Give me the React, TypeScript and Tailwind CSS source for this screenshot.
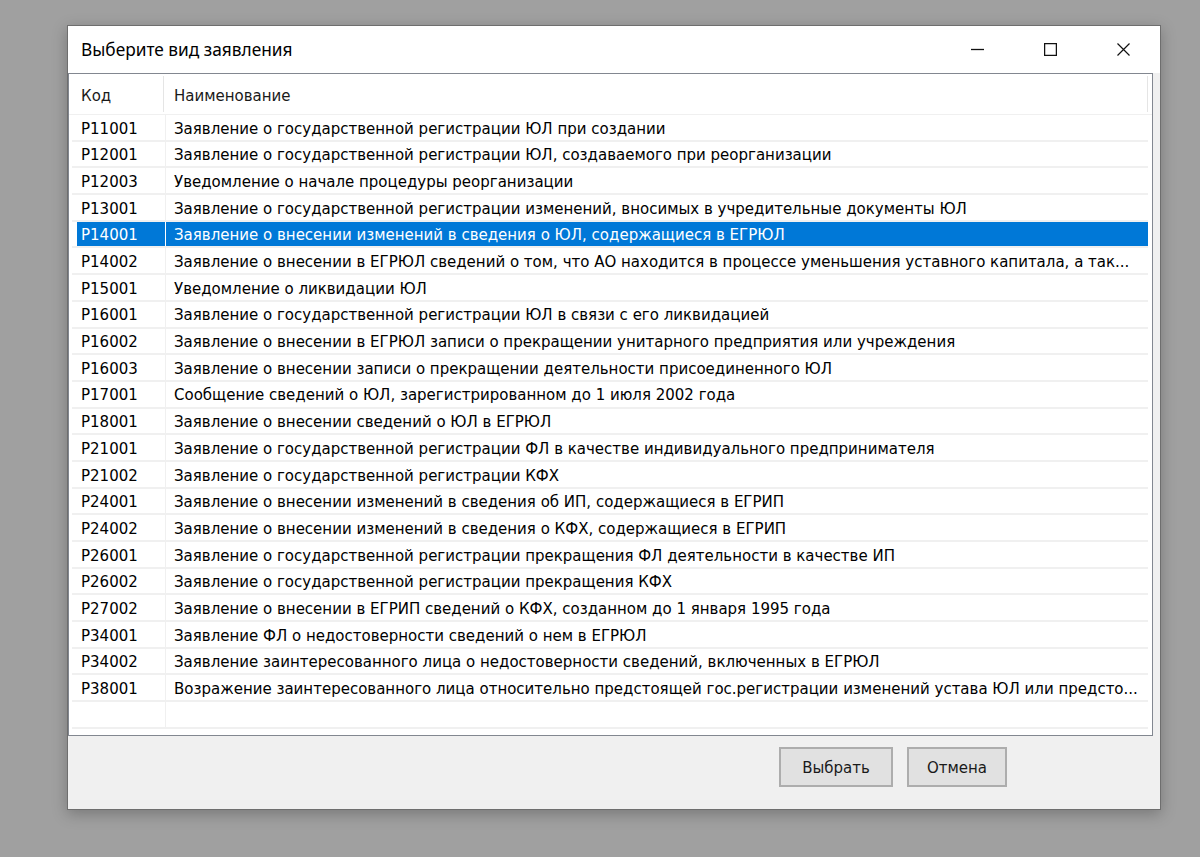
import React from "react";

const rows: [string, string][] = [
  ["P11001", "Заявление о государственной регистрации ЮЛ при создании"],
  ["P12001", "Заявление о государственной регистрации ЮЛ, создаваемого при реорганизации"],
  ["P12003", "Уведомление о начале процедуры реорганизации"],
  ["P13001", "Заявление о государственной регистрации изменений, вносимых в учредительные документы ЮЛ"],
  ["P14001", "Заявление о внесении изменений в сведения о ЮЛ, содержащиеся в ЕГРЮЛ"],
  ["P14002", "Заявление о внесении в ЕГРЮЛ сведений о том, что АО находится в процессе уменьшения уставного капитала, а так..."],
  ["P15001", "Уведомление о ликвидации ЮЛ"],
  ["P16001", "Заявление о государственной регистрации ЮЛ в связи с его ликвидацией"],
  ["P16002", "Заявление о внесении в ЕГРЮЛ записи о прекращении унитарного предприятия или учреждения"],
  ["P16003", "Заявление о внесении записи о прекращении деятельности присоединенного ЮЛ"],
  ["P17001", "Сообщение сведений о ЮЛ, зарегистрированном до 1 июля 2002 года"],
  ["P18001", "Заявление о внесении сведений о ЮЛ в ЕГРЮЛ"],
  ["P21001", "Заявление о государственной регистрации ФЛ в качестве индивидуального предпринимателя"],
  ["P21002", "Заявление о государственной регистрации КФХ"],
  ["P24001", "Заявление о внесении изменений в сведения об ИП, содержащиеся в ЕГРИП"],
  ["P24002", "Заявление о внесении изменений в сведения о КФХ, содержащиеся в ЕГРИП"],
  ["P26001", "Заявление о государственной регистрации прекращения ФЛ деятельности в качестве ИП"],
  ["P26002", "Заявление о государственной регистрации прекращения КФХ"],
  ["P27002", "Заявление о внесении в ЕГРИП сведений о КФХ, созданном до 1 января 1995 года"],
  ["P34001", "Заявление ФЛ о недостоверности сведений о нем в ЕГРЮЛ"],
  ["P34002", "Заявление заинтересованного лица о недостоверности сведений, включенных в ЕГРЮЛ"],
  ["P38001", "Возражение заинтересованного лица относительно предстоящей гос.регистрации изменений устава ЮЛ или предсто..."],
];

const SELECTED = "P14001";

export default function App() {
  return (
    <div className="w-[1200px] h-[857px] bg-[#a0a0a0] pt-[25px] pl-[67px] overflow-hidden">
      <div className="w-[1094px] h-[785px] border border-[#6e6e6e] bg-[#f0f0f0] flex flex-col shadow-[0_4px_14px_rgba(0,0,0,0.25)]">
        {/* title bar */}
        <div className="h-[47px] bg-white flex items-center shrink-0">
          <div className="pl-[13px] flex-1 text-[17.3px] text-black font-['Noto_Sans',sans-serif]">
            Выберите вид заявления
          </div>
          <div className="flex h-full">
            <div className="w-[73px] flex items-center justify-center">
              <svg width="13" height="13" viewBox="0 0 13 13">
                <path d="M0 6.5h13" stroke="#111" strokeWidth="1.3" />
              </svg>
            </div>
            <div className="w-[73px] flex items-center justify-center">
              <svg width="13" height="13" viewBox="0 0 13 13">
                <rect x="0.6" y="0.6" width="11.8" height="11.8" fill="none" stroke="#111" strokeWidth="1.3" />
              </svg>
            </div>
            <div className="w-[73px] flex items-center justify-center">
              <svg width="13" height="13" viewBox="0 0 13 13">
                <path d="M0.5 0.5l12 12M12.5 0.5l-12 12" stroke="#111" strokeWidth="1.2" />
              </svg>
            </div>
          </div>
        </div>

        {/* list view */}
        <div className="mr-[7px] h-[663px] border border-[#828790] bg-white flex flex-col overflow-hidden font-['DejaVu_Sans',Verdana,sans-serif] text-[15px] text-black shrink-0">
          <div className="h-[41px] flex items-center shrink-0 border-b border-[#f0f0f0]">
            <div className="w-[95px] pl-[12px] pt-[5px] h-[36px] flex items-center border-r border-[#e5e5e5] text-[#1a1a1a]">Код</div>
            <div className="w-[984px] pl-[10px] pt-[5px] h-[36px] flex items-center border-r border-[#e5e5e5] text-[#1a1a1a]">Наименование</div>
          </div>
          <div className="pl-[3px]">
            {rows.map(([code, name]) => {
              const sel = code === SELECTED;
              return (
                <div key={code} className="h-[26.7px] w-[1076px] flex border-b-2 border-[#f0f0f0]">
                  {sel ? (
                    <>
                      <div className="ml-[5px] w-[89px] pl-[4px] pt-[3px] flex items-center bg-[#0078d7] text-white border-r border-white">
                        {code}
                      </div>
                      <div className="flex-1 pl-[8px] pt-[3px] flex items-center whitespace-nowrap overflow-hidden bg-[#0078d7] text-white">
                        {name}
                      </div>
                    </>
                  ) : (
                    <>
                      <div className="w-[94px] pl-[9px] pt-[3px] flex items-center border-r border-[#f0f0f0]">{code}</div>
                      <div className="flex-1 pl-[8px] pt-[3px] flex items-center whitespace-nowrap overflow-hidden">{name}</div>
                    </>
                  )}
                </div>
              );
            })}
            <div className="h-[26.7px] w-[1076px] flex border-b-2 border-[#f0f0f0]">
              <div className="w-[94px] border-r border-[#f0f0f0]" />
            </div>
          </div>
        </div>

        {/* buttons */}
        <div className="flex-1 flex justify-end items-start pt-[11px] pr-[153px] gap-[14px] font-['DejaVu_Sans',Verdana,sans-serif] text-[15px] text-[#1a1a1a]">
          <button className="w-[114px] h-[40px] bg-[#e1e1e1] border-2 border-[#adadad] flex items-center justify-center pt-[2px]">
            Выбрать
          </button>
          <button className="w-[100px] h-[40px] bg-[#e1e1e1] border-2 border-[#adadad] flex items-center justify-center pt-[2px]">
            Отмена
          </button>
        </div>
      </div>
    </div>
  );
}
